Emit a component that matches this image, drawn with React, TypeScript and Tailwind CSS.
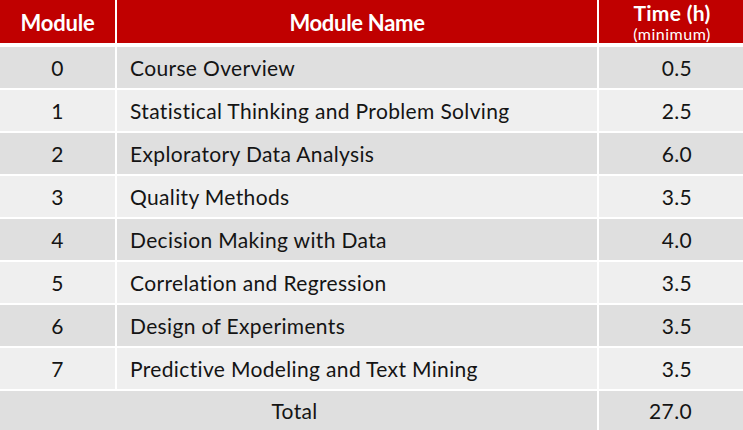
const modules = [
  { id: 0, name: "Course Overview", time: "0.5" },
  { id: 1, name: "Statistical Thinking and Problem Solving", time: "2.5" },
  { id: 2, name: "Exploratory Data Analysis", time: "6.0" },
  { id: 3, name: "Quality Methods", time: "3.5" },
  { id: 4, name: "Decision Making with Data", time: "4.0" },
  { id: 5, name: "Correlation and Regression", time: "3.5" },
  { id: 6, name: "Design of Experiments", time: "3.5" },
  { id: 7, name: "Predictive Modeling and Text Mining", time: "3.5" },
];

export default function App() {
  return (
    <div
      className="flex h-[430px] w-[743px] flex-col gap-[2px] overflow-hidden bg-white text-[#141414]"
      style={{ fontFamily: "Lato, 'Liberation Sans', sans-serif", fontVariantLigatures: "none" }}
    >
      {/* Header */}
      <div className="mb-[2px] grid h-[43px] shrink-0 grid-cols-[115px_480px_144px] gap-x-[2px] text-white">
        <div className="flex items-center justify-center bg-[#c00000] pt-[2px] text-[22px] font-bold tracking-[-0.2px]">
          Module
        </div>
        <div className="flex items-center justify-center bg-[#c00000] pt-[2px] text-[22px] font-bold tracking-[-0.3px]">
          Module Name
        </div>
        <div className="flex flex-col items-center justify-center overflow-hidden bg-[#c00000] pl-[2px]">
          <span className="text-[21px] font-bold leading-[24px] tracking-[0.3px]">Time (h)</span>
          <span className="text-[16px] leading-[18px] tracking-[0.5px]">(minimum)</span>
        </div>
      </div>

      {/* Rows */}
      {modules.map((m) => {
        const bg = m.id % 2 === 0 ? "bg-[#dfdfdf]" : "bg-[#efefef]";
        return (
          <div
            key={m.id}
            className="grid h-[41px] shrink-0 grid-cols-[115px_480px_144px] gap-x-[2px] text-[21px] tracking-[0.35px]"
          >
            <div className={`flex items-center justify-center ${bg}`}>{m.id}</div>
            <div className={`flex items-center pl-[13px] ${bg}`}>{m.name}</div>
            <div className={`flex items-center justify-end pr-[51px] ${bg}`}>{m.time}</div>
          </div>
        );
      })}

      {/* Total */}
      <div className="grid flex-1 grid-cols-[597px_144px] gap-x-[2px] text-[21px] tracking-[0.35px]">
        <div className="flex items-center justify-center bg-[#dfdfdf] pr-[8px]">Total</div>
        <div className="flex items-center justify-end bg-[#dfdfdf] pr-[51px]">27.0</div>
      </div>
    </div>
  );
}
